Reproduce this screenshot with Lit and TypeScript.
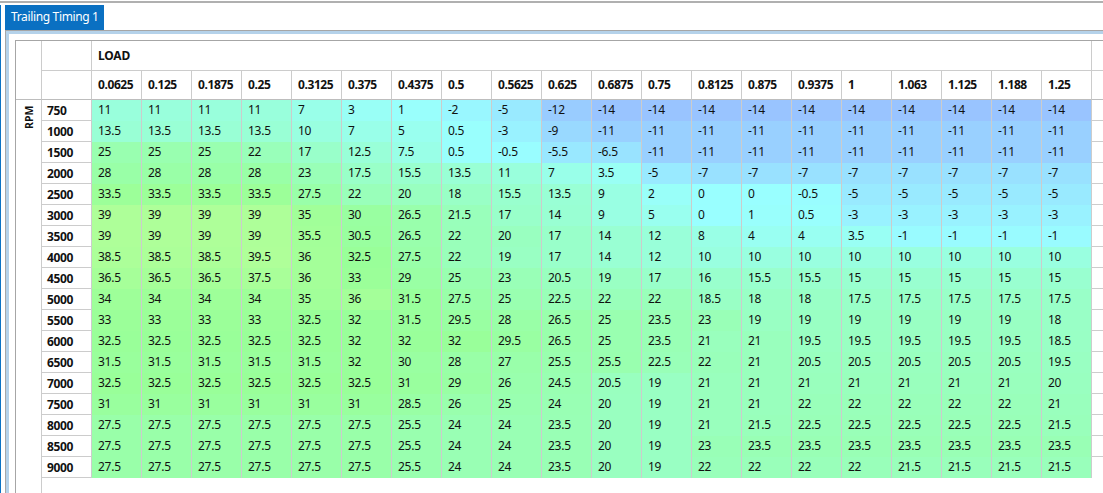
import { LitElement, html, css } from 'lit'
import { customElement } from 'lit/decorators.js'

const LOADS = ['0.0625', '0.125', '0.1875', '0.25', '0.3125', '0.375', '0.4375', '0.5', '0.5625', '0.625',
  '0.6875', '0.75', '0.8125', '0.875', '0.9375', '1', '1.063', '1.125', '1.188', '1.25']

const TABLE: [number, number[]][] = [
  [750, [11, 11, 11, 11, 7, 3, 1, -2, -5, -12, -14, -14, -14, -14, -14, -14, -14, -14, -14, -14]],
  [1000, [13.5, 13.5, 13.5, 13.5, 10, 7, 5, 0.5, -3, -9, -11, -11, -11, -11, -11, -11, -11, -11, -11, -11]],
  [1500, [25, 25, 25, 22, 17, 12.5, 7.5, 0.5, -0.5, -5.5, -6.5, -11, -11, -11, -11, -11, -11, -11, -11, -11]],
  [2000, [28, 28, 28, 28, 23, 17.5, 15.5, 13.5, 11, 7, 3.5, -5, -7, -7, -7, -7, -7, -7, -7, -7]],
  [2500, [33.5, 33.5, 33.5, 33.5, 27.5, 22, 20, 18, 15.5, 13.5, 9, 2, 0, 0, -0.5, -5, -5, -5, -5, -5]],
  [3000, [39, 39, 39, 39, 35, 30, 26.5, 21.5, 17, 14, 9, 5, 0, 1, 0.5, -3, -3, -3, -3, -3]],
  [3500, [39, 39, 39, 39, 35.5, 30.5, 26.5, 22, 20, 17, 14, 12, 8, 4, 4, 3.5, -1, -1, -1, -1]],
  [4000, [38.5, 38.5, 38.5, 39.5, 36, 32.5, 27.5, 22, 19, 17, 14, 12, 10, 10, 10, 10, 10, 10, 10, 10]],
  [4500, [36.5, 36.5, 36.5, 37.5, 36, 33, 29, 25, 23, 20.5, 19, 17, 16, 15.5, 15.5, 15, 15, 15, 15, 15]],
  [5000, [34, 34, 34, 34, 35, 36, 31.5, 27.5, 25, 22.5, 22, 22, 18.5, 18, 18, 17.5, 17.5, 17.5, 17.5, 17.5]],
  [5500, [33, 33, 33, 33, 32.5, 32, 31.5, 29.5, 28, 26.5, 25, 23.5, 23, 19, 19, 19, 19, 19, 19, 18]],
  [6000, [32.5, 32.5, 32.5, 32.5, 32.5, 32, 32, 32, 29.5, 26.5, 25, 23.5, 21, 21, 19.5, 19.5, 19.5, 19.5, 19.5, 18.5]],
  [6500, [31.5, 31.5, 31.5, 31.5, 31.5, 32, 30, 28, 27, 25.5, 25.5, 22.5, 22, 21, 20.5, 20.5, 20.5, 20.5, 20.5, 19.5]],
  [7000, [32.5, 32.5, 32.5, 32.5, 32.5, 32.5, 31, 29, 26, 24.5, 20.5, 19, 21, 21, 21, 21, 21, 21, 21, 20]],
  [7500, [31, 31, 31, 31, 31, 31, 28.5, 26, 25, 24, 20, 19, 21, 21, 22, 22, 22, 22, 22, 21]],
  [8000, [27.5, 27.5, 27.5, 27.5, 27.5, 27.5, 25.5, 24, 24, 23.5, 20, 19, 21, 21.5, 22.5, 22.5, 22.5, 22.5, 22.5, 21.5]],
  [8500, [27.5, 27.5, 27.5, 27.5, 27.5, 27.5, 25.5, 24, 24, 23.5, 20, 19, 23, 23.5, 23.5, 23.5, 23.5, 23.5, 23.5, 23.5]],
  [9000, [27.5, 27.5, 27.5, 27.5, 27.5, 27.5, 25.5, 24, 24, 23.5, 20, 19, 22, 22, 22, 22, 21.5, 21.5, 21.5, 21.5]]
]

// blue for retard, through cyan at zero, to yellow-green at the top of the map
function cellColor (value: number) {
  const hue = value < 0 ? 180 - value * 2.5 : 180 - value * 1.85
  return `hsl(${hue} 100% 80%)`
}

@customElement('app-root')
export class AppRoot extends LitElement {
  static styles = css`
    :host {
      display: flex;
      flex-direction: column;
      height: 493px;
      overflow: hidden;
      background: #fff;
      color: #111;
      font-family: "Noto Sans", "Open Sans", sans-serif;
      font-size: 12px;
      letter-spacing: -0.25px;
    }

    .topline {
      flex: none;
      height: 2px;
      margin-top: 1px;
      background: #b0b0b0;
    }

    .main {
      flex: 1;
      min-height: 0;
      display: flex;
      flex-direction: column;
      margin-top: 2px;
      padding-left: 4px;
      border-left: 1px solid #0a72c4;
    }

    .strip {
      flex: none;
      display: flex;
    }

    .tab {
      width: 99px;
      height: 25px;
      box-sizing: border-box;
      padding-left: 6px;
      line-height: 24px;
      background: #0a70c2;
      color: #fff;
      letter-spacing: -0.35px;
      white-space: nowrap;
    }

    .pane {
      flex: 1;
      min-height: 0;
      border-top: 1px solid #a6a6a6;
      border-left: 1px solid #a6a6a6;
    }

    .inner {
      height: 100%;
      box-sizing: border-box;
      padding: 6px 0 0 6px;
      border-top: 3px solid #b5d2ea;
      border-left: 3px solid #b5d2ea;
    }

    .grid {
      height: 100%;
      box-sizing: border-box;
      display: grid;
      grid-template-columns: 25px 51px repeat(20, 50px) 1fr;
      grid-template-rows: 30px 29px repeat(18, 21px) 1fr;
      border-top: 1px solid #a6a6a6;
      border-left: 1px solid #a6a6a6;
    }

    .corner-rpm {
      grid-row: 1 / 3;
      border-bottom: 1px solid #bdbdbd;
    }

    .corner {
      border-left: 1px solid #ccc;
      border-right: 1px solid #ccc;
      border-bottom: 1px solid #ccc;
    }

    .corner.low {
      border-bottom-color: #bdbdbd;
    }

    .load {
      grid-column: 3 / 23;
      padding-left: 6px;
      line-height: 30px;
      font-weight: 700;
      letter-spacing: -0.2px;
      border-right: 1px solid #ccc;
      border-bottom: 1px solid #ccc;
    }

    .fill-top {
      border-bottom: 1px solid #ccc;
    }

    .head {
      padding-left: 6px;
      line-height: 28px;
      font-weight: 700;
      letter-spacing: -0.4px;
      border-right: 1px solid #ccc;
      border-bottom: 1px solid #bdbdbd;
    }

    .fill-head {
      border-bottom: 1px solid #bdbdbd;
    }

    .rpm {
      grid-column: 1;
      grid-row: 3 / 21;
      display: flex;
      justify-content: center;
    }

    .rpm span {
      writing-mode: vertical-rl;
      transform: rotate(180deg);
      height: 24px;
      margin-top: 5px;
      font-size: 10.5px;
      font-weight: 700;
      letter-spacing: 0;
    }

    .row-head {
      grid-column: 2;
      padding-left: 5px;
      line-height: 21px;
      font-weight: 700;
      letter-spacing: -0.4px;
      border-left: 1px solid #ccc;
      border-right: 1px solid #ccc;
      border-bottom: 1px solid #ccc;
    }

    .cell {
      padding-left: 6px;
      line-height: 20px;
      border-right: 1px solid #ccc;
    }

    .fill-row {
      grid-column: 23;
      border-bottom: 1px solid #ccc;
    }

    .fill-row.last {
      border-bottom: none;
    }

    .foot {
      grid-column: 2;
      border-left: 1px solid #ccc;
    }
  `

  render () {
    return html`
      <div class="topline"></div>
      <div class="main">
        <div class="strip"><div class="tab">Trailing Timing 1</div></div>
        <div class="pane">
          <div class="inner">
            <div class="grid">
              <div class="corner-rpm"></div>
              <div class="corner"></div>
              <div class="load">LOAD</div>
              <div class="fill-top"></div>
              <div class="corner low"></div>
              ${LOADS.map(load => html`<div class="head">${load}</div>`)}
              <div class="fill-head"></div>
              <div class="rpm"><span>RPM</span></div>
              ${TABLE.map(([rpm, values], i) => html`
                <div class="row-head">${rpm}</div>
                ${values.map(value => html`<div class="cell" style="background:${cellColor(value)}">${value}</div>`)}
                <div class="fill-row ${i === TABLE.length - 1 ? 'last' : ''}"></div>
              `)}
              <div class="foot"></div>
            </div>
          </div>
        </div>
      </div>
    `
  }
}
